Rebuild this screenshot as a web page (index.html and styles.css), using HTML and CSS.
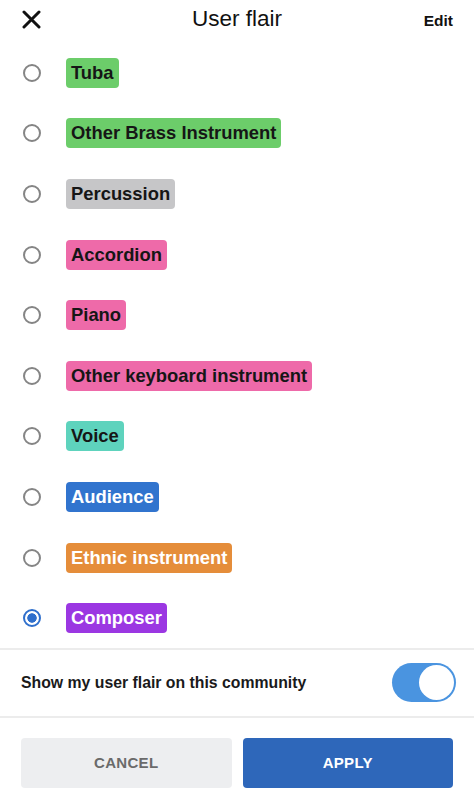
FILE: index.html
```html
<!DOCTYPE html>
<html>
<head>
<meta charset="utf-8">
<link rel="stylesheet" href="styles.css">
</head>
<body>
<div class="page">
  <header class="header">
    <svg class="close" width="19" height="19" viewBox="0 0 19 19"><path d="M2 2 L17 17 M17 2 L2 17" stroke="#111" stroke-width="3" stroke-linecap="round"/></svg>
    <div class="title">User flair</div>
    <div class="edit">Edit</div>
  </header>
  <ul class="list">
    <li class="row"><span class="radio"></span><span class="tag green">Tuba</span></li>
    <li class="row"><span class="radio"></span><span class="tag green">Other Brass Instrument</span></li>
    <li class="row"><span class="radio"></span><span class="tag gray">Percussion</span></li>
    <li class="row"><span class="radio"></span><span class="tag pink">Accordion</span></li>
    <li class="row"><span class="radio"></span><span class="tag pink">Piano</span></li>
    <li class="row"><span class="radio"></span><span class="tag pink">Other keyboard instrument</span></li>
    <li class="row"><span class="radio"></span><span class="tag teal">Voice</span></li>
    <li class="row"><span class="radio"></span><span class="tag blue">Audience</span></li>
    <li class="row"><span class="radio"></span><span class="tag orange">Ethnic instrument</span></li>
    <li class="row"><span class="radio checked"></span><span class="tag purple">Composer</span></li>
  </ul>
  <div class="toggle-row">
    <span class="toggle-label">Show my user flair on this community</span>
    <span class="toggle"><span class="knob"></span></span>
  </div>
  <div class="buttons">
    <button class="btn cancel">CANCEL</button>
    <button class="btn apply">APPLY</button>
  </div>
</div>
</body>
</html>
```
FILE: styles.css
```css
* { box-sizing: border-box; }
body {
  margin: 0;
  background: #fff;
  font-family: "Liberation Sans", Arial, sans-serif;
  color: #1a1a1b;
}
.page { width: 474px; }
.header {
  height: 42px;
  display: flex;
  align-items: center;
  justify-content: space-between;
  padding: 0 21px 4px 22px;
  position: relative;
}
.close { display: block; }
.title {
  position: absolute;
  left: 0; right: 0;
  top: 6px;
  text-align: center;
  font-size: 22.5px;
  font-weight: normal;
  color: #111;
  pointer-events: none;
}
.edit {
  font-size: 15.5px;
  font-weight: bold;
  color: #111;
  margin-top: 3px;
}
.list {
  list-style: none;
  margin: 0;
  padding: 0;
}
.row {
  height: 60.6px;
  display: flex;
  align-items: center;
  padding-left: 23px;
  padding-top: 1px;
}
.radio {
  width: 18px;
  height: 18px;
  border-radius: 50%;
  border: 2px solid #858585;
  margin-right: 25px;
  flex: none;
}
.radio.checked {
  border-color: #2f6fcc;
  background: radial-gradient(circle, #2f6fcc 0 4.4px, #fff 5px);
}
.tag {
  height: 30px;
  line-height: 30px;
  padding: 0 5px;
  border-radius: 4px;
  font-size: 18.4px;
  font-weight: bold;
  color: #161616;
}
.green { background: #6ccd6a; }
.gray { background: #c6c6c8; }
.pink { background: #ee6aa9; }
.teal { background: #5ed3bd; }
.blue { background: #3174ce; color: #fff; }
.orange { background: #e58d3a; color: #fff; }
.purple { background: #9b37e2; color: #fff; }
.toggle-row {
  border-top: 2px solid #ececec;
  border-bottom: 2px solid #ececec;
  height: 70px;
  display: flex;
  align-items: center;
  justify-content: space-between;
  padding: 0 18px 0 21px;
}
.toggle-label {
  font-size: 15.8px;
  font-weight: bold;
  color: #1a1a1b;
}
.toggle {
  width: 64px;
  height: 39px;
  border-radius: 20px;
  background: #4a94e0;
  display: flex;
  align-items: center;
  justify-content: flex-end;
  padding-right: 2px;
}
.knob {
  width: 35px;
  height: 35px;
  border-radius: 50%;
  background: #fff;
}
.buttons {
  display: flex;
  gap: 11px;
  padding: 20px 21px 0 21px;
}
.btn {
  flex: 1;
  height: 50px;
  border: none;
  border-radius: 4px;
  font-family: "Liberation Sans", Arial, sans-serif;
  font-size: 15px;
  font-weight: bold;
  letter-spacing: 0.3px;
  padding-top: 1px;
}
.cancel { background: #edeef0; color: #6a6a6a; }
.apply { background: #2e67ba; color: #fff; }
```
